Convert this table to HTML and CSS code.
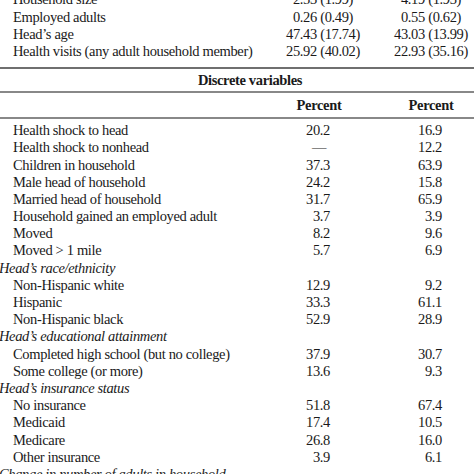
FILE: index.html
```html
<!DOCTYPE html>
<html>
<head>
<meta charset="utf-8">
<link rel="stylesheet" href="styles.css">
</head>
<body>
<div class="page">
  <div class="top">
    <div class="row"><span class="lab">Household size</span><span class="stat">2.53 (1.99)</span><span class="stat s2">4.19 (1.93)</span></div>
    <div class="row"><span class="lab">Employed adults</span><span class="stat">0.26 (0.49)</span><span class="stat s2">0.55 (0.62)</span></div>
    <div class="row"><span class="lab">Head’s age</span><span class="stat">47.43 (17.74)</span><span class="stat s2">43.03 (13.99)</span></div>
    <div class="row"><span class="lab">Health visits (any adult household member)</span><span class="stat">25.92 (40.02)</span><span class="stat s2">22.93 (35.16)</span></div>
  </div>
  <div class="section">Discrete variables</div>
  <div class="head row"><span></span><span class="hd">Percent</span><span class="hd">Percent</span></div>
  <div class="body">
    <div class="row"><span class="lab">Health shock to head</span><span class="num">20.2</span><span class="num">16.9</span></div>
    <div class="row"><span class="lab">Health shock to nonhead</span><span class="num dash">—</span><span class="num">12.2</span></div>
    <div class="row"><span class="lab">Children in household</span><span class="num">37.3</span><span class="num">63.9</span></div>
    <div class="row"><span class="lab">Male head of household</span><span class="num">24.2</span><span class="num">15.8</span></div>
    <div class="row"><span class="lab">Married head of household</span><span class="num">31.7</span><span class="num">65.9</span></div>
    <div class="row"><span class="lab">Household gained an employed adult</span><span class="num">3.7</span><span class="num">3.9</span></div>
    <div class="row"><span class="lab">Moved</span><span class="num">8.2</span><span class="num">9.6</span></div>
    <div class="row"><span class="lab">Moved &gt; 1 mile</span><span class="num">5.7</span><span class="num">6.9</span></div>
    <div class="row"><span class="grp">Head’s race/ethnicity</span></div>
    <div class="row"><span class="lab">Non-Hispanic white</span><span class="num">12.9</span><span class="num">9.2</span></div>
    <div class="row"><span class="lab">Hispanic</span><span class="num">33.3</span><span class="num">61.1</span></div>
    <div class="row"><span class="lab">Non-Hispanic black</span><span class="num">52.9</span><span class="num">28.9</span></div>
    <div class="row"><span class="grp">Head’s educational attainment</span></div>
    <div class="row"><span class="lab">Completed high school (but no college)</span><span class="num">37.9</span><span class="num">30.7</span></div>
    <div class="row"><span class="lab">Some college (or more)</span><span class="num">13.6</span><span class="num">9.3</span></div>
    <div class="row"><span class="grp">Head’s insurance status</span></div>
    <div class="row"><span class="lab">No insurance</span><span class="num">51.8</span><span class="num">67.4</span></div>
    <div class="row"><span class="lab">Medicaid</span><span class="num">17.4</span><span class="num">10.5</span></div>
    <div class="row"><span class="lab">Medicare</span><span class="num">26.8</span><span class="num">16.0</span></div>
    <div class="row"><span class="lab">Other insurance</span><span class="num">3.9</span><span class="num">6.1</span></div>
    <div class="row"><span class="grp">Change in number of adults in household</span></div>
  </div>
</div>
</body>
</html>
```
FILE: styles.css
```css
html, body {
  margin: 0;
  padding: 0;
  background: #fff;
  overflow: hidden;
}
.page {
  width: 476px;
  font-family: "Liberation Serif", "Times New Roman", serif;
  font-size: 14.5px;
  letter-spacing: -0.35px;
  color: #1a1a1a;
}
.row {
  display: grid;
  grid-template-columns: minmax(0, 1fr) 90px 90px;
  column-gap: 22px;
  height: 17.2px;
  line-height: 17.2px;
  white-space: nowrap;
}
.row > span {
  min-width: 0;
}
.top {
  margin-top: -8.6px;
  padding-bottom: 6.6px;
  border-bottom: 2px solid #6f6f6f;
}
.lab {
  padding-left: 13px;
}
.stat {
  text-align: center;
  padding-left: 8px;
}
.stat.s2 {
  padding-left: 0;
}
.section {
  height: 22px;
  line-height: 22px;
  text-align: center;
  padding-left: 24px;
  font-weight: bold;
  border-bottom: 2px solid #888;
}
.head {
  height: 24px;
  line-height: 24px;
  border-bottom: 2px solid #888;
}
.hd {
  text-align: center;
  font-weight: bold;
}
.body {
  padding-top: 3.4px;
}
.num {
  text-align: right;
  padding-right: 34px;
}
.num.dash {
  text-align: center;
  padding-right: 0;
}
.grp {
  font-style: italic;
  margin-left: -1px;
  grid-column: 1 / 4;
}
```
